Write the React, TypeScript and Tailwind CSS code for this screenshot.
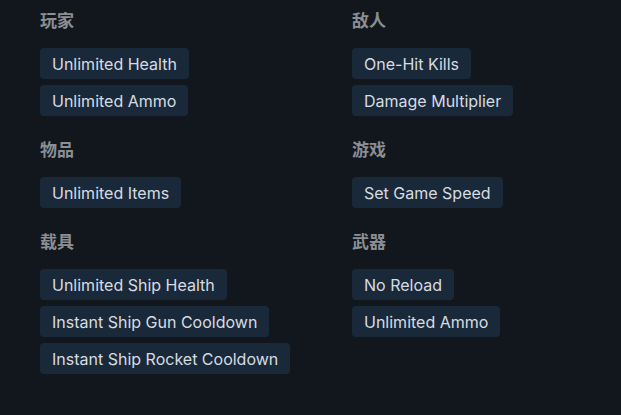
const sections: { title: string; items: string[] }[][] = [
  [
    { title: '玩家', items: ['Unlimited Health', 'Unlimited Ammo'] },
    { title: '敌人', items: ['One-Hit Kills', 'Damage Multiplier'] },
  ],
  [
    { title: '物品', items: ['Unlimited Items'] },
    { title: '游戏', items: ['Set Game Speed'] },
  ],
  [
    { title: '载具', items: ['Unlimited Ship Health', 'Instant Ship Gun Cooldown', 'Instant Ship Rocket Cooldown'] },
    { title: '武器', items: ['No Reload', 'Unlimited Ammo'] },
  ],
];

function Section({ title, items }: { title: string; items: string[] }) {
  return (
    <div>
      <h3 className="text-[17px] leading-[24px] font-bold text-[#8b8e93] mb-[15px]">{title}</h3>
      <div className="flex flex-col items-start gap-[6px]">
        {items.map((item) => (
          <button
            key={item}
            className="h-[31px] px-3 pt-px rounded-[4px] bg-[#1a2939] text-[#d6dce2] text-[16px] leading-[30px] whitespace-nowrap"
          >
            {item}
          </button>
        ))}
      </div>
    </div>
  );
}

export default function App() {
  return (
    <main
      className="w-[621px] h-[415px] overflow-hidden bg-[#12161d] pt-[9px] px-[40px]"
      style={{ fontFamily: 'Inter, "Noto Sans CJK SC", sans-serif' }}
    >
      <div className="grid grid-cols-[312px_1fr] gap-y-[22px]">
        {sections.map((row) =>
          row.map((s) => <Section key={s.title} title={s.title} items={s.items} />)
        )}
      </div>
    </main>
  );
}
